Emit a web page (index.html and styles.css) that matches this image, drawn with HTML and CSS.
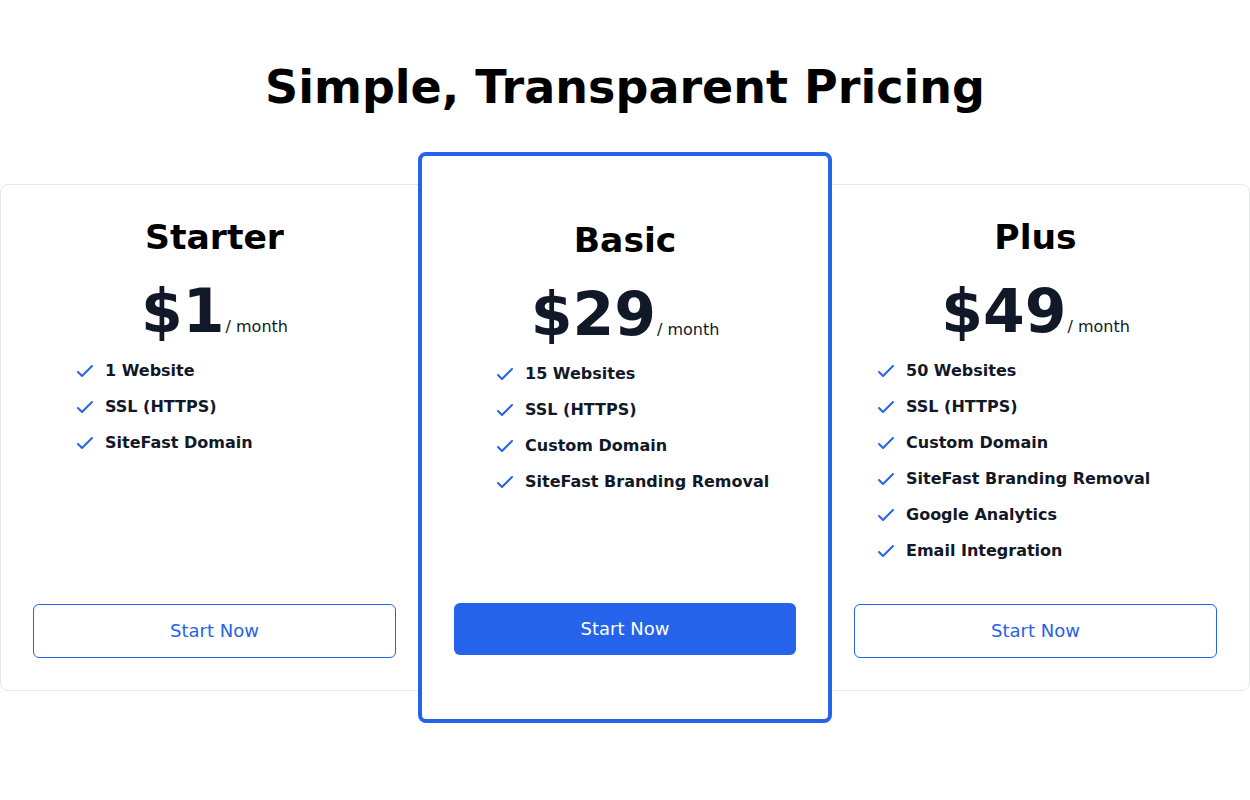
FILE: index.html
```html
<!DOCTYPE html>
<html lang="en">
  <head>
    <meta charset="UTF-8" />
    <meta name="viewport" content="width=device-width, initial-scale=1.0" />
    <title>Pricing</title>
    <link rel="stylesheet" href="styles.css">
  </head>
  <body>
    <section class="pricing">
      <h1 class="pricing-title">Simple, Transparent Pricing</h1>
      <div class="plans">
        <div class="plan">
          <h2 class="plan-name">Starter</h2>
          <div class="plan-price">
            <span class="amount">$1</span>
            <span class="period">/ month</span>
          </div>
          <ul class="features features-starter">
            <li><svg class="check" viewBox="0 0 24 24"><path d="M5 13l4 4L19 7" /></svg>1 Website</li>
            <li><svg class="check" viewBox="0 0 24 24"><path d="M5 13l4 4L19 7" /></svg>SSL (HTTPS)</li>
            <li><svg class="check" viewBox="0 0 24 24"><path d="M5 13l4 4L19 7" /></svg>SiteFast Domain</li>
          </ul>
          <button type="button" class="plan-btn">Start Now</button>
        </div>

        <div class="plan plan-featured">
          <h2 class="plan-name">Basic</h2>
          <div class="plan-price">
            <span class="amount">$29</span>
            <span class="period">/ month</span>
          </div>
          <ul class="features features-basic">
            <li><svg class="check" viewBox="0 0 24 24"><path d="M5 13l4 4L19 7" /></svg>15 Websites</li>
            <li><svg class="check" viewBox="0 0 24 24"><path d="M5 13l4 4L19 7" /></svg>SSL (HTTPS)</li>
            <li><svg class="check" viewBox="0 0 24 24"><path d="M5 13l4 4L19 7" /></svg>Custom Domain</li>
            <li><svg class="check" viewBox="0 0 24 24"><path d="M5 13l4 4L19 7" /></svg>SiteFast Branding Removal</li>
          </ul>
          <button type="button" class="plan-btn">Start Now</button>
        </div>

        <div class="plan">
          <h2 class="plan-name">Plus</h2>
          <div class="plan-price">
            <span class="amount">$49</span>
            <span class="period">/ month</span>
          </div>
          <ul class="features features-plus">
            <li><svg class="check" viewBox="0 0 24 24"><path d="M5 13l4 4L19 7" /></svg>50 Websites</li>
            <li><svg class="check" viewBox="0 0 24 24"><path d="M5 13l4 4L19 7" /></svg>SSL (HTTPS)</li>
            <li><svg class="check" viewBox="0 0 24 24"><path d="M5 13l4 4L19 7" /></svg>Custom Domain</li>
            <li><svg class="check" viewBox="0 0 24 24"><path d="M5 13l4 4L19 7" /></svg>SiteFast Branding Removal</li>
            <li><svg class="check" viewBox="0 0 24 24"><path d="M5 13l4 4L19 7" /></svg>Google Analytics</li>
            <li><svg class="check" viewBox="0 0 24 24"><path d="M5 13l4 4L19 7" /></svg>Email Integration</li>
          </ul>
          <button type="button" class="plan-btn">Start Now</button>
        </div>
      </div>
    </section>
  </body>
</html>
```

FILE: styles.css
```css
body {
  margin: 0;
  font-family: "DejaVu Sans", Verdana, sans-serif;
  color: #111827;
  background: #fff;
}
.pricing {
  padding-top: 60px;
}
.pricing-title {
  margin: 0 0 37px;
  font-size: 46px;
  line-height: 1.2;
  font-weight: bold;
  color: #000;
  text-align: center;
}
.plans {
  display: flex;
  align-items: center;
}
.plan {
  box-sizing: border-box;
  display: flex;
  flex-direction: column;
  width: 429px;
  min-height: 507px;
  padding: 32px;
  border: 1px solid #e5e7eb;
  border-radius: 8px;
  background: #fff;
}
.plan-featured {
  position: relative;
  z-index: 1;
  width: 414px;
  min-height: 571px;
  margin: 0 -11px;
  padding: 64px 32px;
  border: 4px solid #2563eb;
}
.plan-name {
  margin: 0 0 24px;
  font-size: 34.6px;
  line-height: 40px;
  color: #000;
  text-align: center;
}
.plan-price {
  display: flex;
  align-items: baseline;
  justify-content: center;
  margin-bottom: 18px;
}
.amount {
  font-size: 60px;
  line-height: 60px;
  font-weight: bold;
}
.period {
  margin-left: 1px;
  font-size: 16px;
  line-height: 24px;
}
.features {
  list-style: none;
  margin: 0 0 32px;
  padding: 0;
  display: flex;
  flex-direction: column;
  gap: 12px;
}
.features-starter {
  padding-left: 40px;
}
.features-basic {
  padding-left: 39px;
}
.features-plus {
  padding-left: 20px;
}
.features li {
  display: flex;
  align-items: center;
  gap: 8px;
  font-size: 16px;
  line-height: 24px;
  font-weight: bold;
}
.check {
  width: 24px;
  height: 24px;
  flex-shrink: 0;
  fill: none;
  stroke: #2563eb;
  stroke-width: 2;
  stroke-linecap: round;
  stroke-linejoin: round;
}
.plan-btn {
  margin-top: auto;
  width: 100%;
  padding: 12px 16px;
  font-family: inherit;
  font-size: 18px;
  line-height: 28px;
  color: #2563eb;
  background: #fff;
  border: 1px solid #2563eb;
  border-radius: 6px;
  cursor: pointer;
}
.plan-featured .plan-btn {
  color: #fff;
  background: #2563eb;
  border: 0;
}
```
